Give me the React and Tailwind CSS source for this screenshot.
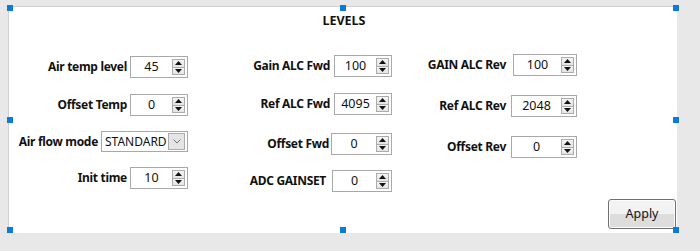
import React from "react";

const FONT = { fontFamily: '"Segoe UI", "Noto Sans", "Open Sans", sans-serif' };

// Small up / down arrow pair on the right side of a spin box
function SpinButtons() {
  return (
    <div className="flex flex-col w-[13px] h-[16px] mr-[2px] border border-[#acacac] bg-[#e9e9e9]">
      <div className="flex-1 flex items-center justify-center border-b border-[#acacac] bg-gradient-to-b from-[#f4f4f4] to-[#e4e4e4]">
        <svg width="7" height="4" viewBox="0 0 7 4">
          <path d="M3.5 0 L7 4 L0 4 Z" fill="#111" />
        </svg>
      </div>
      <div className="flex-1 flex items-center justify-center bg-gradient-to-b from-[#f4f4f4] to-[#e4e4e4]">
        <svg width="7" height="4" viewBox="0 0 7 4">
          <path d="M0 0 L7 0 L3.5 4 Z" fill="#111" />
        </svg>
      </div>
    </div>
  );
}

function SpinBox({ value, width }) {
  return (
    <div
      className="flex items-center h-[22px] border border-[#a9a9a9] bg-white"
      style={{ width }}>
      <span className="flex-1 text-center text-[12.5px] leading-none text-[#111]">
        {value}
      </span>
      <SpinButtons />
    </div>
  );
}

function ComboBox({ value }) {
  return (
    <div className="flex items-center w-[87px] h-[21px] border border-[#a9a9a9] bg-white">
      <span className="flex-1 pl-[3px] text-[12px] leading-none text-[#111]">
        {value}
      </span>
      <div className="flex items-center justify-center w-[17px] h-[17px] mr-[2px] border border-[#acacac] bg-[#e5e5e5]">
        <svg width="8" height="5" viewBox="0 0 8 5">
          <path d="M0.5 0.5 L4 4 L7.5 0.5" fill="none" stroke="#707070" strokeWidth="1" />
        </svg>
      </div>
    </div>
  );
}

function Row({ label, gap, children, className = "" }) {
  return (
    <div className={`flex items-center justify-end ${className}`}>
      <span
        className="text-[12px] font-bold tracking-[-0.3px] text-[#111] whitespace-nowrap"
        style={{ marginRight: gap }}>
        {label}
      </span>
      {children}
    </div>
  );
}

function Handle({ className }) {
  return <div className={`absolute w-[6px] h-[6px] bg-[#0a7bd9] ${className}`} />;
}

export default function App() {
  return (
    <div className="w-[700px] h-[251px] bg-[#e8e8e8] pt-[6px] pl-[8px]" style={FONT}>
      <div className="relative w-[669px] h-[227px] bg-white border-l border-t border-[#d2d2d2]">
        <Handle className="-left-[2px] -top-[2px]" />
        <Handle className="left-[331px] -top-[2px]" />
        <Handle className="left-[664px] -top-[2px]" />
        <Handle className="-left-[2px] top-[110px]" />
        <Handle className="left-[664px] top-[110px]" />
        <Handle className="-left-[2px] top-[220px]" />
        <Handle className="left-[331px] top-[220px]" />
        <Handle className="left-[664px] top-[220px]" />

        <div className="flex flex-col h-full">
          <div className="text-center text-[12.5px] font-bold text-[#111] pt-[6px] leading-[16px] pl-[2px]">
            LEVELS
          </div>

          <div className="flex">
            {/* Column 1 */}
            <div className="w-[179px] flex flex-col items-end">
              <Row label="Air temp level" gap={3} className="mt-[27px]">
                <SpinBox value="45" width={58} />
              </Row>
              <Row label="Offset Temp" gap={3} className="mt-[16px]">
                <SpinBox value="0" width={58} />
              </Row>
              <Row label="Air flow mode" gap={3} className="mt-[15px]">
                <ComboBox value="STANDARD" />
              </Row>
              <Row label="Init time" gap={3} className="mt-[15px]">
                <SpinBox value="10" width={58} />
              </Row>
            </div>

            {/* Column 2 */}
            <div className="w-[204px] flex flex-col items-end">
              <Row label="Gain ALC Fwd" gap={4} className="mt-[26px]">
                <SpinBox value="100" width={58} />
              </Row>
              <Row label="Ref ALC Fwd" gap={4} className="mt-[16px]">
                <SpinBox value="4095" width={58} />
              </Row>
              <Row label="Offset Fwd" gap={2} className="mt-[18px]">
                <SpinBox value="0" width={61} />
              </Row>
              <Row label="ADC GAINSET" gap={6} className="mt-[15px]">
                <SpinBox value="0" width={60} />
              </Row>
            </div>

            {/* Column 3 */}
            <div className="w-[185px] flex flex-col items-end">
              <Row label="GAIN ALC Rev" gap={7} className="mt-[25px]">
                <SpinBox value="100" width={64} />
              </Row>
              <Row label="Ref ALC Rev" gap={5} className="mt-[19px]">
                <SpinBox value="2048" width={66} />
              </Row>
              <Row label="Offset Rev" gap={5} className="mt-[19px]">
                <SpinBox value="0" width={66} />
              </Row>
            </div>
          </div>

          <div className="flex-1 flex items-end justify-end pr-[1px] pb-[4px]">
            <button className="w-[68px] h-[30px] rounded-[3px] border border-[#707070] bg-gradient-to-b from-[#f3f3f3] from-50% to-[#dddddd] to-50% shadow-[inset_0_0_0_1px_#fcfcfc] text-[12.5px] text-[#111]">
              Apply
            </button>
          </div>
        </div>
      </div>
    </div>
  );
}
